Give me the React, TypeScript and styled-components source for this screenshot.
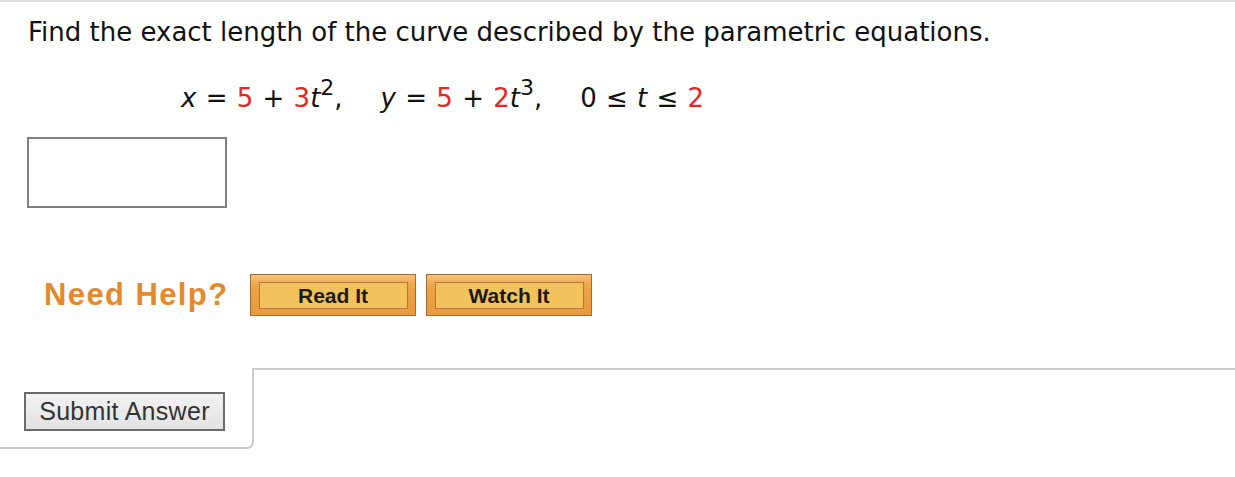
import React from "react";
import styled, { createGlobalStyle } from "styled-components";

const GlobalStyle = createGlobalStyle`
  html, body { margin: 0; padding: 0; background: #ffffff; }
  body { font-family: "DejaVu Sans", Verdana, sans-serif; color: #000; }
`;

const Page = styled.div`
  border-top: 2px solid #dddddd;
  width: 1235px;
`;

const Prompt = styled.p`
  margin: 14px 0 0 28px;
  font-size: 26px;
  line-height: 32px;
  color: #111;
  white-space: nowrap;
`;

const Equation = styled.div`
  margin: 34px 0 0 181px;
  font-size: 26px;
  line-height: 32px;
  word-spacing: 1px;
  color: #111;
  white-space: nowrap;
`;

const Var = styled.i`
  font-style: italic;
`;

const Red = styled.span`
  color: #e8261c;
`;

const Sup = styled.sup`
  font-size: 22px;
  line-height: 0;
  vertical-align: 12px;
`;

const Gap = styled.span<{ $w: number }>`
  display: inline-block;
  width: ${(p) => p.$w}px;
`;

const AnswerBox = styled.input`
  display: block;
  box-sizing: border-box;
  margin: 23px 0 0 27px;
  width: 200px;
  height: 71px;
  border: 2px solid #808080;
  background: #fff;
  outline: none;
`;

const HelpRow = styled.div`
  display: flex;
  align-items: center;
  margin-top: 66px;
  padding-left: 44px;
  height: 42px;
`;

const HelpLabel = styled.span`
  font-family: "Liberation Sans", Arial, sans-serif;
  font-weight: bold;
  font-size: 31px;
  letter-spacing: 1.4px;
  color: #e4892e;
  margin-right: 21px;
`;

const HelpButton = styled.button`
  box-sizing: border-box;
  width: 166px;
  height: 42px;
  padding: 7px 7px 6px 8px;
  margin-right: 10px;
  border: 1px solid #9c6c36;
  background: linear-gradient(#f6c47a 0%, #eea447 25%, #e99a3c 100%);
  cursor: pointer;
  display: flex;
`;

const HelpInner = styled.span`
  flex: 1;
  display: flex;
  align-items: center;
  justify-content: center;
  border: 1px solid #b27a3c;
  background: #f2c25c;
  font-family: "Liberation Sans", Arial, sans-serif;
  font-weight: bold;
  font-size: 21px;
  color: #1c1a14;
`;

const SubmitArea = styled.div`
  display: flex;
  margin-top: 52px;
`;

const SubmitPanel = styled.div`
  box-sizing: border-box;
  width: 254px;
  padding: 24px 0 16px 24px;
  border-right: 2px solid #cccccc;
  border-bottom: 2px solid #cccccc;
  border-bottom-right-radius: 7px;
`;

const Filler = styled.div`
  flex: 1;
  border-top: 2px solid #cccccc;
`;

const SubmitButton = styled.button`
  box-sizing: border-box;
  width: 201px;
  height: 39px;
  border: 2px solid #6b6b6b;
  background: linear-gradient(#f2f2f2, #e2e2e2);
  font-family: "Liberation Sans", Arial, sans-serif;
  font-size: 25px;
  letter-spacing: 0.3px;
  color: #333;
  padding: 0;
  cursor: pointer;
`;

export default function App() {
  return (
    <Page>
      <GlobalStyle />
      <Prompt>Find the exact length of the curve described by the parametric equations.</Prompt>
      <Equation>
        <Var>x</Var> = <Red>5</Red> + <Red>3</Red>
        <Var>t</Var>
        <Sup>2</Sup>,<Gap $w={38} />
        <Var>y</Var> = <Red>5</Red> + <Red>2</Red>
        <Var>t</Var>
        <Sup>3</Sup>,<Gap $w={38} />
        0 ≤ <Var>t</Var> ≤ <Red>2</Red>
      </Equation>
      <AnswerBox type="text" aria-label="answer" />
      <HelpRow>
        <HelpLabel>Need Help?</HelpLabel>
        <HelpButton>
          <HelpInner>Read It</HelpInner>
        </HelpButton>
        <HelpButton>
          <HelpInner>Watch It</HelpInner>
        </HelpButton>
      </HelpRow>
      <SubmitArea>
        <SubmitPanel>
          <SubmitButton>Submit Answer</SubmitButton>
        </SubmitPanel>
        <Filler />
      </SubmitArea>
    </Page>
  );
}
